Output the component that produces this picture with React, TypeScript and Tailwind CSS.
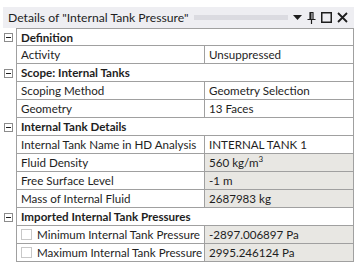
import React from "react";

type Row =
  | { kind: "header"; label: string }
  | { kind: "prop"; label: string; value: React.ReactNode; gray?: boolean; check?: boolean };

const rows: Row[] = [
  { kind: "header", label: "Definition" },
  { kind: "prop", label: "Activity", value: "Unsuppressed" },
  { kind: "header", label: "Scope: Internal Tanks" },
  { kind: "prop", label: "Scoping Method", value: "Geometry Selection" },
  { kind: "prop", label: "Geometry", value: "13 Faces" },
  { kind: "header", label: "Internal Tank Details" },
  { kind: "prop", label: "Internal Tank Name in HD Analysis", value: "INTERNAL TANK 1" },
  {
    kind: "prop",
    label: "Fluid Density",
    value: (
      <span>
        560 kg/m<sup className="text-[8px] -top-[5px]">3</sup>
      </span>
    ),
    gray: true,
  },
  { kind: "prop", label: "Free Surface Level", value: "-1 m", gray: true },
  { kind: "prop", label: "Mass of Internal Fluid", value: "2687983 kg", gray: true },
  { kind: "header", label: "Imported Internal Tank Pressures" },
  { kind: "prop", label: "Minimum Internal Tank Pressure", value: "-2897.006897 Pa", gray: true, check: true },
  { kind: "prop", label: "Maximum Internal Tank Pressure", value: "2995.246124 Pa", gray: true, check: true },
];

const Expander = () => (
  <div className="w-[9px] h-[9px] border border-[#8c8c8c] bg-white flex items-center justify-center">
    <div className="w-[5px] h-[1px] bg-[#1e1e1e]" />
  </div>
);

export default function App() {
  return (
    <div
      className="w-[361px] h-[271px] bg-white pt-[7px] text-[#1e1e1e]"
      style={{ fontFamily: 'Lato, "Noto Sans", sans-serif' }}
    >
      {/* title bar */}
      <div className="ml-[3px] w-[351px] h-[21px] bg-[#eeeef2] flex items-center pl-[5px] pr-[6px]">
        <span className="text-[12.2px] leading-none whitespace-nowrap pt-[1px]">Details of "Internal Tank Pressure"</span>
        <div className="flex-1 ml-[6px] mr-[5px] h-[5px] bg-[radial-gradient(circle,#c4c4cc_0.6px,transparent_0.8px)] bg-[length:2px_2px]" />
        <div className="flex items-center gap-[5px]">
          <svg width="9" height="6" viewBox="0 0 9 6">
            <path d="M0 0 H9 L4.5 5 Z" fill="#1e1e1e" />
          </svg>
          <svg width="9" height="12" viewBox="0 0 9 12">
            <path d="M2.5 0.5 H6.5 M3 0.5 V7 M6 0.5 V7 M0.5 7.5 H8.5 M4.5 7.5 V12" stroke="#1e1e1e" strokeWidth="1.2" fill="none" />
            <rect x="3" y="1" width="1.5" height="6" fill="#1e1e1e" />
          </svg>
          <svg width="11" height="11" viewBox="0 0 11 11">
            <rect x="0.75" y="0.75" width="9.5" height="9.5" stroke="#1e1e1e" strokeWidth="1.5" fill="none" />
          </svg>
          <svg width="11" height="11" viewBox="0 0 11 11">
            <path d="M1 1 L10 10 M10 1 L1 10" stroke="#1e1e1e" strokeWidth="1.8" />
          </svg>
        </div>
      </div>

      {/* property grid */}
      <div className="flex flex-col text-[11.6px] leading-none">
        {rows.map((r, i) => (
          <div key={i} className="flex h-[18px]">
            <div className="w-[16px] flex items-center justify-center">
              {r.kind === "header" && <Expander />}
            </div>
            <div
              className={`w-[338px] flex border-l border-r border-b border-[#a0a0a0] ${i === 0 ? "border-t h-[18px]" : "h-[18px]"}`}
            >
              {r.kind === "header" ? (
                <div className="flex-1 flex items-center pl-[4px] pt-[1px] font-bold bg-white">{r.label}</div>
              ) : (
                <>
                  <div className="w-[188px] shrink-0 border-r border-[#a0a0a0] flex items-center pl-[4px] pt-[1px] bg-white whitespace-nowrap overflow-hidden">
                    {r.check && <div className="w-[11px] h-[11px] shrink-0 border border-[#c8c8c8] bg-white mr-[5px] -mt-[1px]" />}
                    {r.label}
                  </div>
                  <div
                    className={`flex-1 flex items-center pl-[4px] pt-[1px] whitespace-nowrap ${r.gray ? "bg-[#e8e7e3]" : "bg-white"}`}
                  >
                    {r.value}
                  </div>
                </>
              )}
            </div>
          </div>
        ))}
      </div>
    </div>
  );
}
